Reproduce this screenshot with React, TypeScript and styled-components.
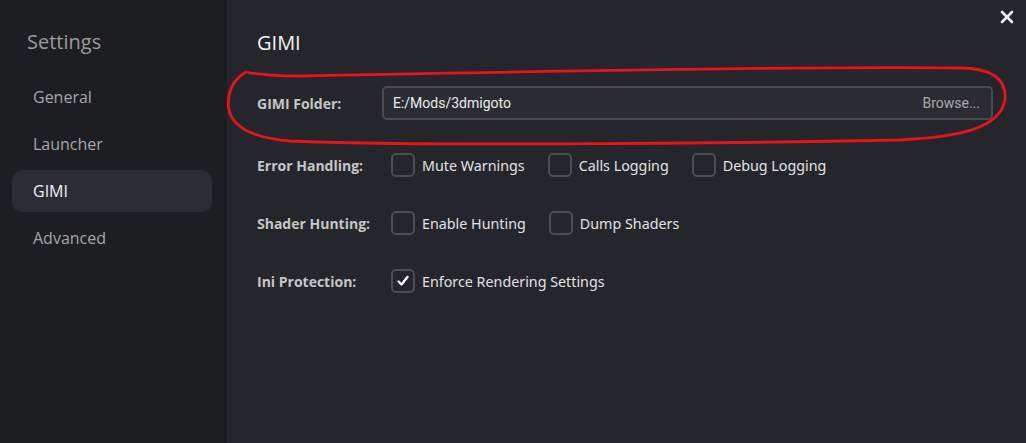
import React, { useState } from "react";
import styled, { createGlobalStyle } from "styled-components";

const GlobalStyle = createGlobalStyle`
  html, body {
    margin: 0;
    padding: 0;
    background: #25262b;
    font-family: "Open Sans", "Noto Sans", sans-serif;
  }
`;

const Page = styled.div`
  position: relative;
  display: flex;
  height: 100vh;
  overflow: hidden;
`;

const Sidebar = styled.nav`
  width: 227px;
  flex-shrink: 0;
  background: #1d1e22;
  padding: 28px 15px 0 12px;
  box-sizing: border-box;
  display: flex;
  flex-direction: column;
`;

const SideTitle = styled.div`
  font-size: 20px;
  line-height: 28px;
  color: #9c9c9e;
  padding-left: 15px;
  margin-bottom: 20px;
`;

const NavList = styled.div`
  display: flex;
  flex-direction: column;
  gap: 5px;
`;

const NavItem = styled.div<{ active?: boolean }>`
  height: 42px;
  display: flex;
  align-items: center;
  padding-left: 21px;
  border-radius: 10px;
  font-size: 16px;
  color: ${({ active }) => (active ? "#f2f2f2" : "#a6a6a8")};
  background: ${({ active }) => (active ? "#2c2d32" : "transparent")};
  cursor: pointer;
`;

const Main = styled.main`
  flex: 1;
  padding: 29px 30px 0 30px;
  display: flex;
  flex-direction: column;
`;

const Heading = styled.h1`
  margin: 0 0 29px 0;
  font-size: 20px;
  line-height: 28px;
  font-weight: 400;
  color: #f4f4f4;
`;

const Rows = styled.div`
  display: flex;
  flex-direction: column;
  gap: 24px;
`;

const Row = styled.div<{ spaced?: boolean }>`
  display: flex;
  align-items: center;
  min-height: 34px;
  margin-bottom: ${({ spaced }) => (spaced ? "4px" : "0")};
`;

const Label = styled.div`
  width: 125px;
  flex-shrink: 0;
  font-size: 14px;
  font-weight: 700;
  color: #c6c6c8;
`;

const PathInput = styled.div`
  width: 611px;
  height: 34px;
  box-sizing: border-box;
  border: 2px solid #4a4b50;
  border-radius: 5px;
  background: #2b2c31;
  display: flex;
  align-items: center;
  justify-content: space-between;
  padding: 0 11px 0 9px;
  font-family: Roboto, "Liberation Sans", sans-serif;
  font-size: 14px;
`;

const PathText = styled.span`
  color: #ececec;
`;

const Browse = styled.span`
  color: #a9a9ab;
`;

const Checks = styled.div`
  display: flex;
  align-items: center;
  gap: 23px;
  padding-left: 9px;
`;

const CheckItem = styled.label`
  display: flex;
  align-items: center;
  gap: 7px;
  font-family: "Noto Sans", "Open Sans", sans-serif;
  font-size: 14.3px;
  color: #e2e2e4;
  cursor: pointer;
`;

const Box = styled.span`
  width: 24px;
  height: 24px;
  box-sizing: border-box;
  border: 2px solid #4c4d52;
  border-radius: 5px;
  background: #25262b;
  display: flex;
  align-items: center;
  justify-content: center;
`;

const CloseButton = styled.button`
  position: absolute;
  top: 8px;
  right: 10px;
  width: 18px;
  height: 18px;
  padding: 0;
  border: none;
  background: transparent;
  display: flex;
  align-items: center;
  justify-content: center;
  cursor: pointer;
`;

const Annotation = styled.svg`
  position: absolute;
  left: 0;
  top: 0;
  pointer-events: none;
`;

const Check = ({ label, checked }: { label: string; checked?: boolean }) => {
  const [on, setOn] = useState(!!checked);
  return (
    <CheckItem onClick={() => setOn(!on)}>
      <Box>
        {on && (
          <svg width="14" height="14" viewBox="0 0 14 14">
            <path d="M2.5 7.5 L5.5 10.5 L11.5 3" fill="none" stroke="#fff" strokeWidth="2.4" strokeLinecap="round" strokeLinejoin="round" />
          </svg>
        )}
      </Box>
      {label}
    </CheckItem>
  );
};

const nav = ["General", "Launcher", "GIMI", "Advanced"];

export default function App() {
  const [active, setActive] = useState("GIMI");
  return (
    <>
      <GlobalStyle />
      <Page>
        <Sidebar>
          <SideTitle>Settings</SideTitle>
          <NavList>
            {nav.map((n) => (
              <NavItem key={n} active={n === active} onClick={() => setActive(n)}>
                {n}
              </NavItem>
            ))}
          </NavList>
        </Sidebar>
        <Main>
          <Heading>GIMI</Heading>
          <Rows>
            <Row spaced>
              <Label>GIMI Folder:</Label>
              <PathInput>
                <PathText>E:/Mods/3dmigoto</PathText>
                <Browse>Browse...</Browse>
              </PathInput>
            </Row>
            <Row>
              <Label>Error Handling:</Label>
              <Checks>
                <Check label="Mute Warnings" />
                <Check label="Calls Logging" />
                <Check label="Debug Logging" />
              </Checks>
            </Row>
            <Row>
              <Label>Shader Hunting:</Label>
              <Checks>
                <Check label="Enable Hunting" />
                <Check label="Dump Shaders" />
              </Checks>
            </Row>
            <Row>
              <Label>Ini Protection:</Label>
              <Checks>
                <Check label="Enforce Rendering Settings" checked />
              </Checks>
            </Row>
          </Rows>
        </Main>
        <CloseButton aria-label="Close">
          <svg width="14" height="14" viewBox="0 0 14 14">
            <path d="M2 2 L12 12 M12 2 L2 12" stroke="#ececec" strokeWidth="2.6" strokeLinecap="round" />
          </svg>
        </CloseButton>
        <Annotation width="1026" height="443" viewBox="0 0 1026 443">
          <path
            d="M246 72 C232 80, 226 95, 229 110 C233 128, 255 138, 290 141 C400 146, 700 144, 900 140 C960 137, 1000 128, 1005 100 C1007 78, 990 68, 960 68 C800 66, 500 72, 300 76 C270 76, 255 74, 246 72"
            fill="none"
            stroke="#e8131b"
            strokeWidth="2.8"
            strokeLinecap="round"
          />
        </Annotation>
      </Page>
    </>
  );
}
